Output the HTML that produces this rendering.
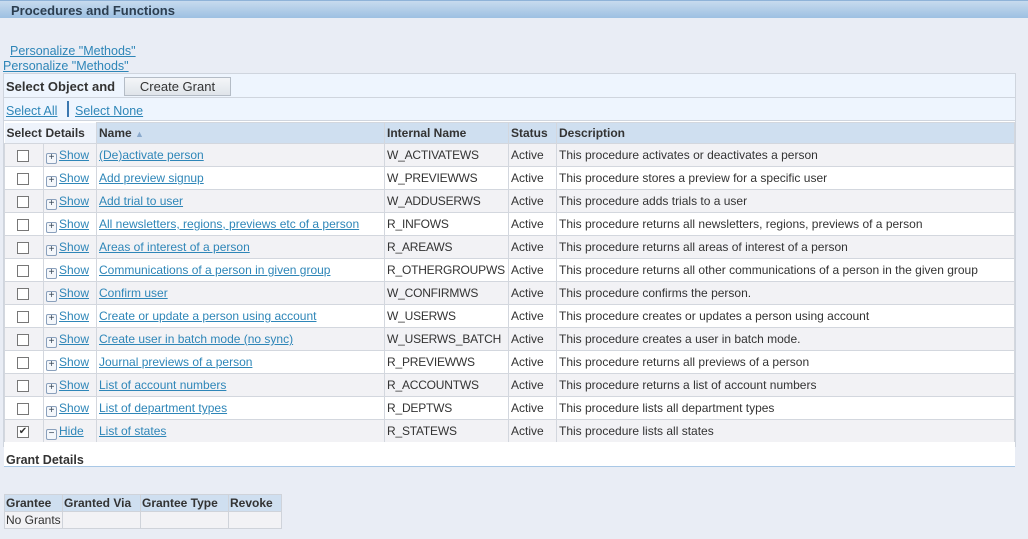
<!DOCTYPE html>
<html><head><style>
body{margin:0;width:1028px;height:539px;background:#e9edf5;font-family:"Liberation Sans",sans-serif;font-size:12px;color:#333;position:relative;overflow:hidden}
.hdr{position:absolute;left:0;top:0;width:1028px;height:17px;background:linear-gradient(#c7dbee,#9dc0e2);border-top:1px solid #8fb3d8}
.hdr b{position:absolute;left:11px;top:2px;font-size:13px;color:#2c3e50}
a{color:#2e86b8;text-decoration:underline}
.p1{position:absolute;left:10px;top:44px;font-size:12.5px}
.p2{position:absolute;left:3px;top:59px;font-size:12.5px}
.box{position:absolute;left:3px;top:73px;width:1011px;height:373px;background:#fff;border:1px solid #cfd5de;border-bottom:none}
.bar1{position:absolute;left:0;top:0;width:1011px;height:23px;background:#eef5fe;border-bottom:1px solid #cfd5de}
.bar1 b{position:absolute;left:2px;top:5px;font-size:13px}
.btn{position:absolute;left:120px;top:3px;width:105px;height:17px;background:linear-gradient(#f4f6f8,#dfe4ea);border:1px solid #b4bcc6;font-size:13px;text-align:center;line-height:17px}
.bar2{position:absolute;left:0;top:24px;width:1011px;height:22px;background:#eef5fe;border-bottom:1px solid #cfd5de}
.bar2 .a1{position:absolute;left:2px;top:6px;font-size:12.5px}
.bar2 .sep{position:absolute;left:63px;top:3px;width:2px;height:16px;background:#3b78b0}
.bar2 .a2{position:absolute;left:71px;top:6px;font-size:12.5px}
table.m{position:absolute;left:0;top:48px;border-collapse:collapse;width:1011px;table-layout:fixed}
.m td,.m th{height:22px;padding:0 2px;border:1px solid #d3d7de;white-space:nowrap;overflow:hidden;font-size:12px;text-align:left;vertical-align:middle}
.m th{font-weight:bold;background:#cfdff0;height:20px}
.m th.w{background:#eef3fb;border:none}
tr.g td{background:#f2f2f5}
.cb{display:inline-block;width:10px;height:10px;border:1px solid #777;background:#fff;margin-left:10px;vertical-align:middle;font-size:10px;line-height:10px;text-align:center}
.pm{display:inline-block;width:9px;height:9px;border:1px solid #8aa0bc;border-radius:2px;font-size:10px;line-height:8px;text-align:center;color:#345;vertical-align:middle;position:relative;top:3px;margin-right:2px;background:#f4f7fb}
.it{font-size:11.5px;letter-spacing:-0.2px}
.gd{position:absolute;left:0;top:368px;width:1011px;height:24px;background:#fff;border-bottom:1px solid #a9c8e6}
.gd b{position:absolute;left:2px;top:11px;font-size:12.5px}
table.gt{position:absolute;left:4px;top:494px;border-collapse:collapse;width:277px;table-layout:fixed}
.gt td,.gt th{height:16px;border:1px solid #cfd3da;padding:0 1px;font-size:12px;white-space:nowrap;overflow:hidden;text-align:left}
.gt th{background:#cfdff0}
.gt td{background:#f2f2f5}
</style></head><body>
<div class="hdr"><b>Procedures and Functions</b></div>
<a class="p1">Personalize "Methods"</a>
<a class="p2">Personalize "Methods"</a>
<div class="box">
<div class="bar1"><b>Select Object and</b><div class="btn">Create Grant</div></div>
<div class="bar2"><a class="a1">Select All</a><span class="sep"></span><a class="a2">Select None</a></div>
<table class="m">
<colgroup><col style="width:39px"><col style="width:53px"><col style="width:288px"><col style="width:124px"><col style="width:48px"><col></colgroup>
<tr><th class="w">Select</th><th class="w">Details</th><th>Name <span style="color:#8aa9cc;font-size:9px">▲</span></th><th>Internal Name</th><th>Status</th><th>Description</th></tr>
<tr class="g"><td><span class="cb"></span></td><td><span class="pm">+</span><a>Show</a></td><td><a>(De)activate person</a></td><td class="it">W_ACTIVATEWS</td><td>Active</td><td>This procedure activates or deactivates a person</td></tr>
<tr><td><span class="cb"></span></td><td><span class="pm">+</span><a>Show</a></td><td><a>Add preview signup</a></td><td class="it">W_PREVIEWWS</td><td>Active</td><td>This procedure stores a preview for a specific user</td></tr>
<tr class="g"><td><span class="cb"></span></td><td><span class="pm">+</span><a>Show</a></td><td><a>Add trial to user</a></td><td class="it">W_ADDUSERWS</td><td>Active</td><td>This procedure adds trials to a user</td></tr>
<tr><td><span class="cb"></span></td><td><span class="pm">+</span><a>Show</a></td><td><a>All newsletters, regions, previews etc of a person</a></td><td class="it">R_INFOWS</td><td>Active</td><td>This procedure returns all newsletters, regions, previews of a person</td></tr>
<tr class="g"><td><span class="cb"></span></td><td><span class="pm">+</span><a>Show</a></td><td><a>Areas of interest of a person</a></td><td class="it">R_AREAWS</td><td>Active</td><td>This procedure returns all areas of interest of a person</td></tr>
<tr><td><span class="cb"></span></td><td><span class="pm">+</span><a>Show</a></td><td><a>Communications of a person in given group</a></td><td class="it">R_OTHERGROUPWS</td><td>Active</td><td>This procedure returns all other communications of a person in the given group</td></tr>
<tr class="g"><td><span class="cb"></span></td><td><span class="pm">+</span><a>Show</a></td><td><a>Confirm user</a></td><td class="it">W_CONFIRMWS</td><td>Active</td><td>This procedure confirms the person.</td></tr>
<tr><td><span class="cb"></span></td><td><span class="pm">+</span><a>Show</a></td><td><a>Create or update a person using account</a></td><td class="it">W_USERWS</td><td>Active</td><td>This procedure creates or updates a person using account</td></tr>
<tr class="g"><td><span class="cb"></span></td><td><span class="pm">+</span><a>Show</a></td><td><a>Create user in batch mode (no sync)</a></td><td class="it">W_USERWS_BATCH</td><td>Active</td><td>This procedure creates a user in batch mode.</td></tr>
<tr><td><span class="cb"></span></td><td><span class="pm">+</span><a>Show</a></td><td><a>Journal previews of a person</a></td><td class="it">R_PREVIEWWS</td><td>Active</td><td>This procedure returns all previews of a person</td></tr>
<tr class="g"><td><span class="cb"></span></td><td><span class="pm">+</span><a>Show</a></td><td><a>List of account numbers</a></td><td class="it">R_ACCOUNTWS</td><td>Active</td><td>This procedure returns a list of account numbers</td></tr>
<tr><td><span class="cb"></span></td><td><span class="pm">+</span><a>Show</a></td><td><a>List of department types</a></td><td class="it">R_DEPTWS</td><td>Active</td><td>This procedure lists all department types</td></tr>
<tr class="g"><td><span class="cb">✔</span></td><td><span class="pm">−</span><a>Hide</a></td><td><a>List of states</a></td><td class="it">R_STATEWS</td><td>Active</td><td>This procedure lists all states</td></tr>
</table>
<div class="gd"><b>Grant Details</b></div>
</div>
<table class="gt">
<colgroup><col style="width:58px"><col style="width:78px"><col style="width:88px"><col style="width:53px"></colgroup>
<tr><th>Grantee</th><th>Granted Via</th><th>Grantee Type</th><th>Revoke</th></tr>
<tr><td>No Grants</td><td></td><td></td><td></td></tr>
</table>
</body></html>
